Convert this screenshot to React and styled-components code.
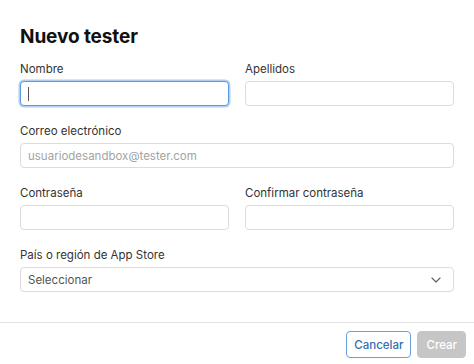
import React from "react";
import styled, { createGlobalStyle } from "styled-components";

const GlobalStyle = createGlobalStyle`
  html, body {
    margin: 0;
    padding: 0;
    background: #fff;
  }
  body {
    font-family: "Inter", "Liberation Sans", sans-serif;
    -webkit-font-smoothing: antialiased;
  }
`;

const NuevoTester = () => {
  return (
    <Modal>
      <Body>
        <Title>Nuevo tester</Title>
        <Row cols={2}>
          <Field>
            <Label>Nombre</Label>
            <InputWrap>
              <Input focused />
              <Caret />
            </InputWrap>
          </Field>
          <Field>
            <Label>Apellidos</Label>
            <Input />
          </Field>
        </Row>
        <Row>
          <Field>
            <Label>Correo electrónico</Label>
            <Input placeholder="usuariodesandbox@tester.com" />
          </Field>
        </Row>
        <Row cols={2}>
          <Field>
            <Label>Contraseña</Label>
            <Input type="password" />
          </Field>
          <Field>
            <Label>Confirmar contraseña</Label>
            <Input type="password" />
          </Field>
        </Row>
        <Row>
          <Field>
            <Label>País o región de App Store</Label>
            <Select>
              <span>Seleccionar</span>
              <svg width="10" height="6" viewBox="0 0 10 6" fill="none">
                <path
                  d="M1 1l4 4 4-4"
                  stroke="#666"
                  strokeWidth="1.2"
                  strokeLinecap="round"
                  strokeLinejoin="round"
                />
              </svg>
            </Select>
          </Field>
        </Row>
      </Body>
      <Footer>
        <Button>Cancelar</Button>
        <Button primary disabled>
          Crear
        </Button>
      </Footer>
    </Modal>
  );
};

export default function App() {
  return (
    <>
      <GlobalStyle />
      <NuevoTester />
    </>
  );
}

const Modal = styled.div`
  width: 474px;
  height: 364px;
  display: flex;
  flex-direction: column;
  background: #fff;
  overflow: hidden;
`;

const Body = styled.div`
  display: flex;
  flex-direction: column;
  gap: 17px;
  padding: 25px 20px 30px 20px;
  border-bottom: 1px solid #e3e3e3;
`;

const Title = styled.h1`
  margin: 0 0 -5px 0;
  font-size: 19px;
  line-height: 24px;
  font-weight: 700;
  color: #111;
  letter-spacing: -0.1px;
`;

const Row = styled.div`
  display: grid;
  grid-template-columns: ${({ cols }) => (cols === 2 ? "1fr 1fr" : "1fr")};
  column-gap: 16px;
`;

const Field = styled.div`
  display: flex;
  flex-direction: column;
  gap: 4px;
`;

const Label = styled.label`
  font-size: 11.5px;
  line-height: 16px;
  color: #333;
  font-weight: 400;
`;

const InputWrap = styled.div`
  position: relative;
  display: flex;
`;

const Input = styled.input`
  box-sizing: border-box;
  width: 100%;
  height: 25px;
  margin: 0;
  padding: 0 7px;
  font-family: inherit;
  font-size: 11.5px;
  color: #333;
  background: #fff;
  border: 1px solid ${({ focused }) => (focused ? "#5b9be0" : "#dcdcdc")};
  border-radius: 4px;
  outline: none;
  box-shadow: ${({ focused }) =>
    focused ? "0 0 0 1.5px rgba(110, 165, 230, 0.55)" : "none"};

  &::placeholder {
    color: #a3a3a3;
  }
`;

const Caret = styled.span`
  position: absolute;
  left: 8px;
  top: 6px;
  width: 1px;
  height: 14px;
  background: #555;
`;

const Select = styled.div`
  box-sizing: border-box;
  height: 25px;
  display: flex;
  align-items: center;
  justify-content: space-between;
  padding: 0 12px 0 7px;
  font-size: 11.5px;
  color: #555;
  border: 1px solid #dcdcdc;
  border-radius: 4px;
  background: #fff;
`;

const Footer = styled.div`
  display: flex;
  justify-content: flex-end;
  gap: 6px;
  padding: 8px 8px 0 0;
`;

const Button = styled.button`
  box-sizing: border-box;
  height: 27px;
  padding: 0 ${({ primary }) => (primary ? "8px" : "7px")};
  font-family: inherit;
  font-size: 11.5px;
  font-weight: 500;
  border-radius: 4px;
  cursor: pointer;
  color: ${({ primary }) => (primary ? "#fff" : "#2f6db3")};
  background: ${({ primary }) => (primary ? "#c6c6c6" : "#fff")};
  border: 1px solid ${({ primary }) => (primary ? "#c6c6c6" : "#6aa1dc")};
`;
